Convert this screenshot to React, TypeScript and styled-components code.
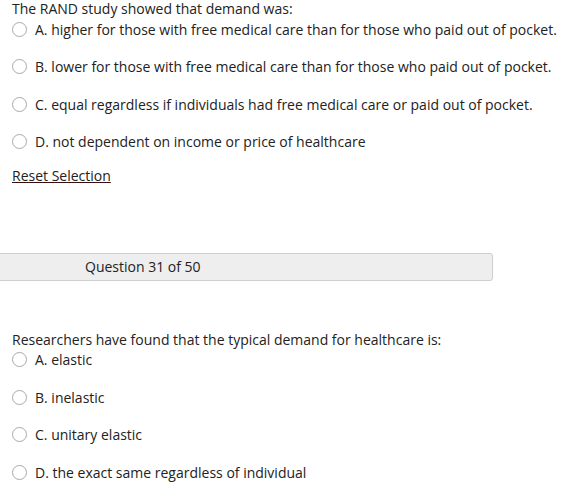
import React from "react";
import styled, { createGlobalStyle } from "styled-components";

const Global = createGlobalStyle`
  html, body { margin: 0; padding: 0; background: #fff; }
  body { font-family: "Open Sans", "Noto Sans", sans-serif; color: #222; overflow: hidden; }
`;

const Page = styled.div`
  width: 568px;
  height: 492px;
  overflow: hidden;
`;

const Block = styled.section<{ $top: number }>`
  padding: 0 0 0 12px;
  margin-top: ${(p) => p.$top}px;
`;

const Prompt = styled.div`
  font-size: 14px;
  line-height: 18px;
  height: 17px;
`;

const Options = styled.div`
  display: flex;
  flex-direction: column;
  gap: 13.5px;
`;

const Option = styled.label`
  display: flex;
  align-items: center;
  height: 24px;
  font-size: 14px;
  cursor: pointer;
`;

const Radio = styled.span`
  width: 13px;
  height: 13px;
  border: 1px solid #a9a9a9;
  border-radius: 50%;
  background: #fff;
  margin-right: 8px;
  flex: none;
`;

const Reset = styled.a`
  display: inline-block;
  margin-top: 12px;
  font-size: 14px;
  line-height: 20px;
  color: #222;
  text-decoration: underline;
  text-decoration-color: #3a0f0f;
`;

const Bar = styled.div`
  margin: 67px 0 0 -6px;
  width: 499px;
  height: 28px;
  box-sizing: border-box;
  background: #eeeeee;
  border: 1px solid #cfcfcf;
  border-radius: 3px;
  display: flex;
  align-items: center;
  padding-left: 90px;
  font-size: 14px;
`;

const first = [
  "A. higher for those with free medical care than for those who paid out of pocket.",
  "B. lower for those with free medical care than for those who paid out of pocket.",
  "C. equal regardless if individuals had free medical care or paid out of pocket.",
  "D. not dependent on income or price of healthcare",
];

const second = [
  "A. elastic",
  "B. inelastic",
  "C. unitary elastic",
  "D. the exact same regardless of individual",
];

export default function App() {
  return (
    <Page>
      <Global />
      <Block $top={0}>
        <Prompt>The RAND study showed that demand was:</Prompt>
        <Options>
          {first.map((t) => (
            <Option key={t}>
              <Radio />
              {t}
            </Option>
          ))}
        </Options>
        <Reset href="#">Reset Selection</Reset>
      </Block>
      <Bar>Question 31 of 50</Bar>
      <Block $top={50}>
        <Prompt>Researchers have found that the typical demand for healthcare is:</Prompt>
        <Options>
          {second.map((t) => (
            <Option key={t}>
              <Radio />
              {t}
            </Option>
          ))}
        </Options>
      </Block>
    </Page>
  );
}
